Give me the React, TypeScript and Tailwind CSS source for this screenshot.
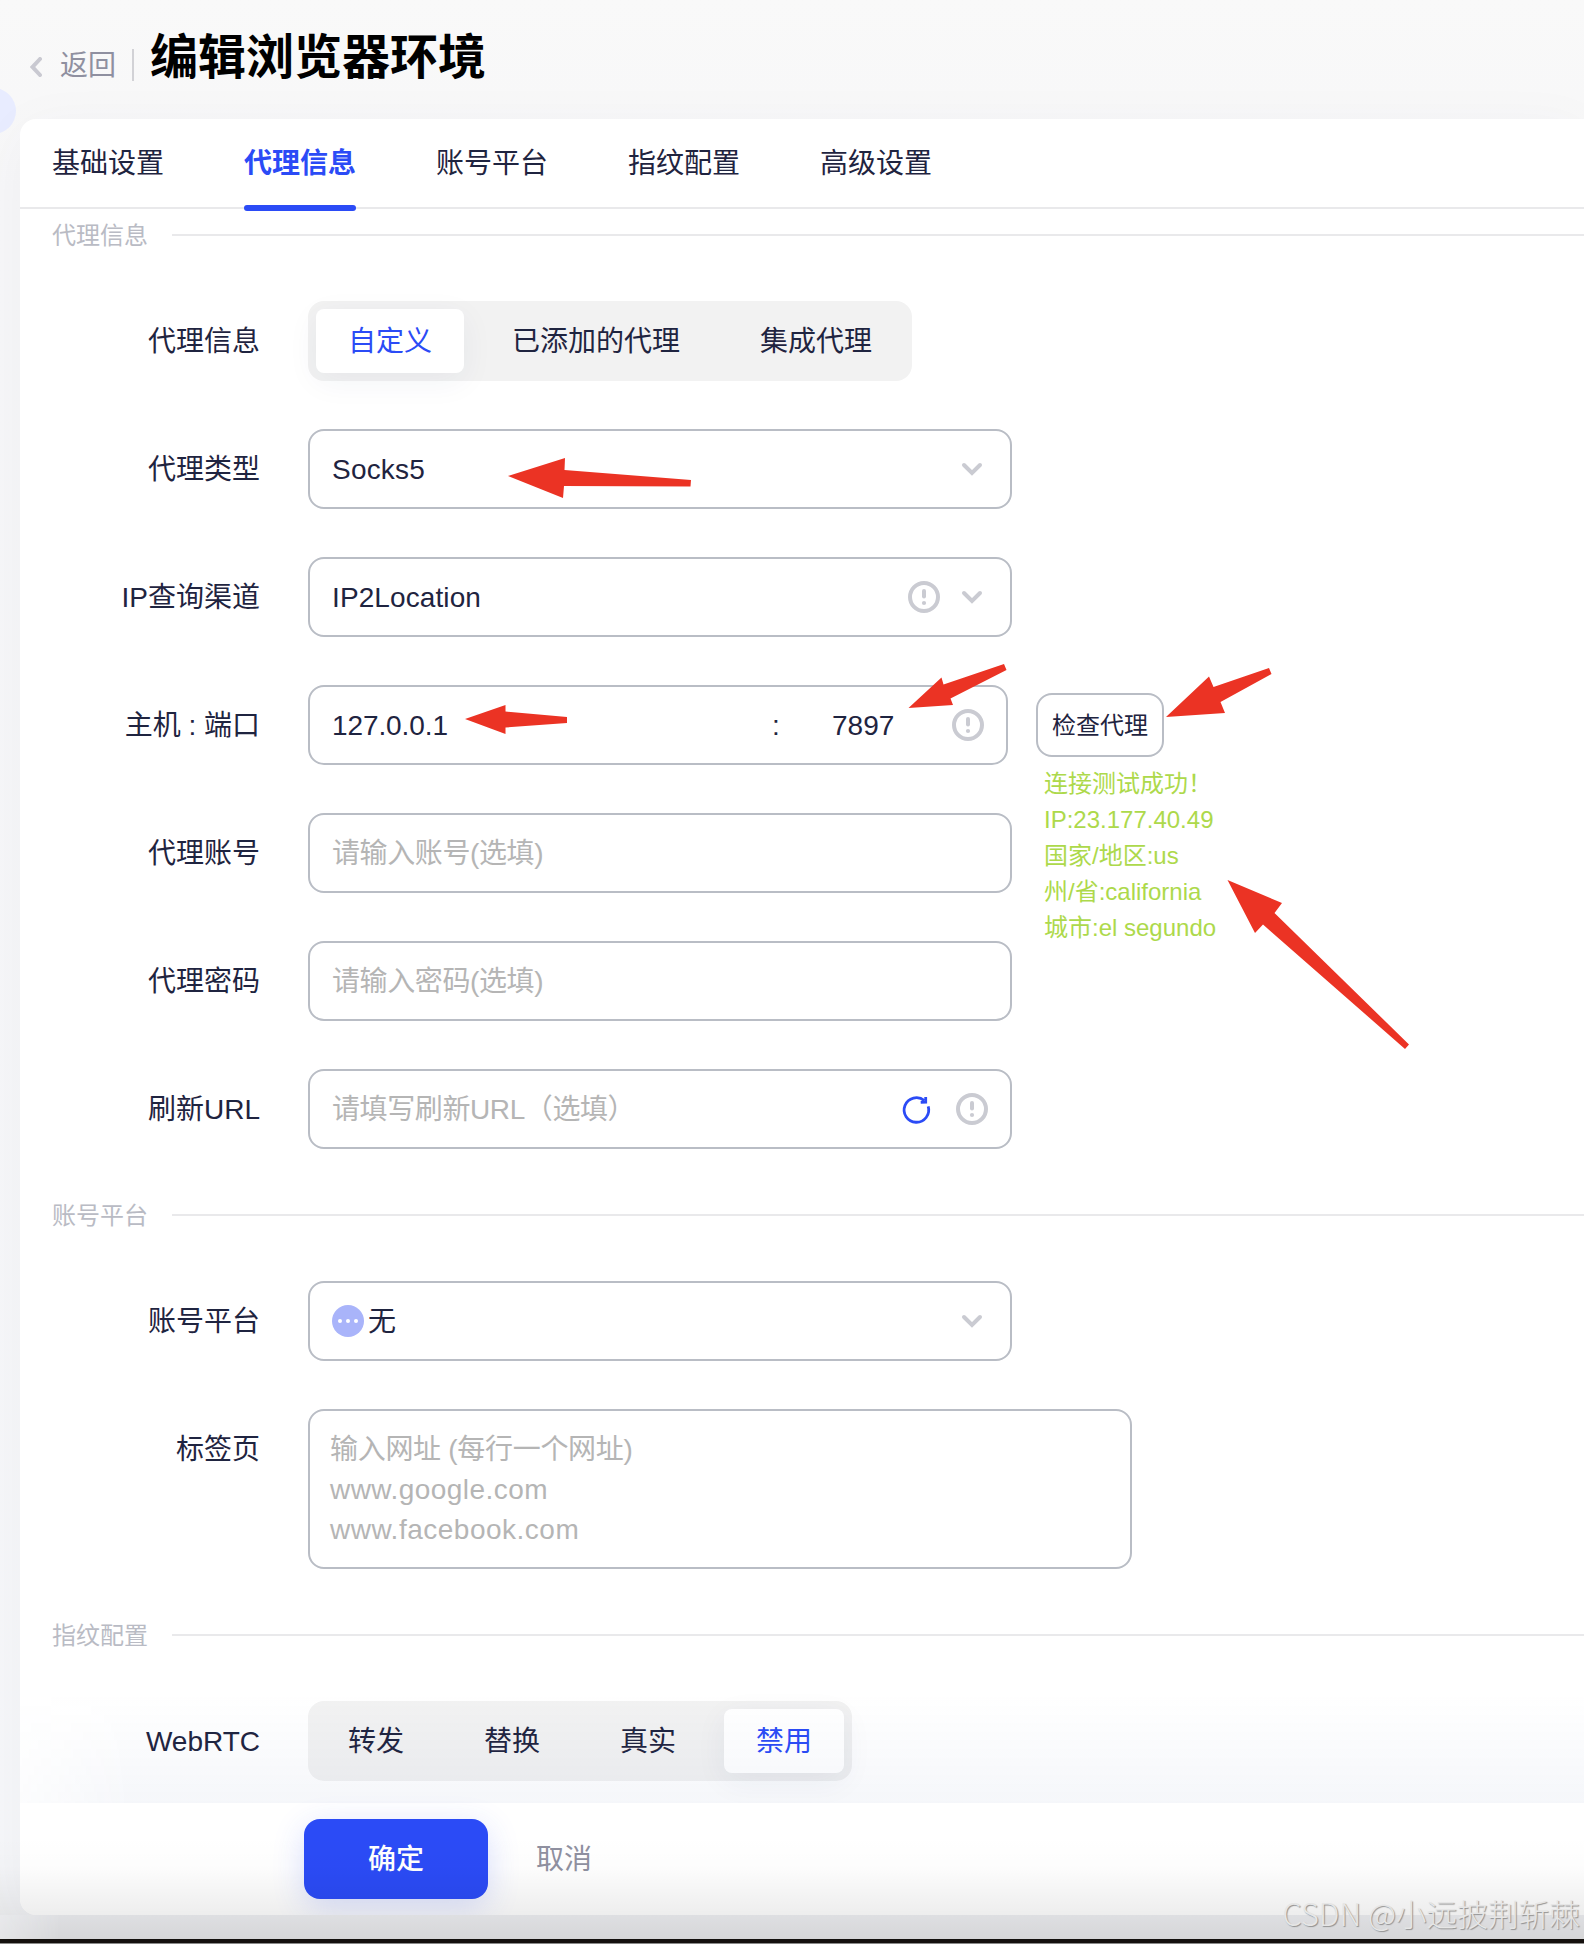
import type { ReactNode } from 'react';

const tabs = ['基础设置', '代理信息', '账号平台', '指纹配置', '高级设置'];
const proxySources = ['自定义', '已添加的代理', '集成代理'];
const webrtcModes = ['转发', '替换', '真实', '禁用'];
const checkResult = [
  '连接测试成功！',
  'IP:23.177.40.49',
  '国家/地区:us',
  '州/省:california',
  '城市:el segundo',
];

const arrows = [
  '508,476 565,458 564.5,470 691,480 690.5,486.5 564,486 563,498',
  '465,719 505.5,705 505.5,711.5 567,717 567,723 505.5,727.5 505.5,734',
  '908.5,708 941.5,677.5 943.5,684.5 1004,664 1006.5,670 950.5,698.5 953,705',
  '1166,717 1209,676.5 1213.5,687 1269,668 1271.5,674 1220.5,702 1225,713',
  '1227.5,880 1282,903 1274.5,913 1409,1044.5 1405,1049 1263,924.5 1255,933',
];

const fieldClass =
  'flex h-20 items-center rounded-2xl border-2 border-[#b9bdc5] bg-white pl-[22px] text-[28px]';
const inputClass =
  'h-full min-w-0 bg-transparent pt-0.5 text-[28px] text-[#1f2440] outline-none placeholder:tracking-[-0.4px] placeholder:text-[#b5b5b5]';

function ChevronDown() {
  return (
    <svg className="h-8 w-8 shrink-0" viewBox="0 0 32 32" fill="none" stroke="#cacbd2" strokeWidth="4">
      <path d="M8 12l8 8 8-8" strokeLinecap="round" />
    </svg>
  );
}

function InfoIcon() {
  return (
    <svg className="h-8 w-8 shrink-0" viewBox="0 0 32 32" fill="none" stroke="#cacbd2" strokeLinecap="round">
      <circle cx="16" cy="16" r="14" strokeWidth="4" />
      <path d="M16 10v5.5" strokeWidth="4" />
      <circle cx="16" cy="22" r="2.1" fill="#cacbd2" stroke="none" />
    </svg>
  );
}

function RefreshIcon() {
  return (
    <svg className="h-8 w-8 shrink-0" viewBox="0 0 32 32" fill="none" stroke="#2b4bf6" strokeWidth="2.8">
      <path d="M28.2 13.4A12.3 12.3 0 1 1 24.4 7.6" />
      <path d="M25.7 4v5.1l-5 .3" />
    </svg>
  );
}

function MoreIcon() {
  return (
    <svg className="mr-1 h-8 w-8 shrink-0" viewBox="0 0 32 32">
      <circle cx="16" cy="16" r="16" fill="#a9b4fa" />
      <g fill="#fff">
        <circle cx="8" cy="16" r="2" />
        <circle cx="16" cy="16" r="2" />
        <circle cx="24" cy="16" r="2" />
      </g>
    </svg>
  );
}

function SectionTitle({ children }: { children: ReactNode }) {
  return (
    <div className="flex h-8 items-center gap-6 pl-8 text-2xl text-[#b9bbc4]">
      <span className="pt-0.5">{children}</span>
      <span className="h-0.5 flex-1 bg-[#e9e9eb]" />
    </div>
  );
}

function Row({ label, children }: { label: string; children: ReactNode }) {
  return (
    <div className="flex h-20 items-start gap-12">
      <div className="w-60 shrink-0 text-right text-[28px] leading-[82px]">{label}</div>
      {children}
    </div>
  );
}

function Segmented({ items, active }: { items: string[]; active: string }) {
  return (
    <div className="flex h-20 gap-4 rounded-2xl bg-[#f2f2f2] p-2">
      {items.map((item) => (
        <button
          key={item}
          className={[
            'h-16 rounded-lg px-8 pt-0.5 text-[28px] leading-[62px]',
            item === active ? 'bg-white text-[#2b4bf6] shadow-[0_8px_32px_rgba(40,50,110,0.06)]' : '',
          ].join(' ')}
        >
          {item}
        </button>
      ))}
    </div>
  );
}

export default function App() {
  return (
    <div className="relative flex h-[1944px] w-[1584px] flex-col overflow-hidden bg-linear-to-b from-[#f9f9f9] via-[#f7f7f8] via-10% to-[#f6f7f9] font-['Liberation_Sans','Noto_Sans_CJK_SC',sans-serif] text-[#1f2440]">
      <header className="flex h-[119px] shrink-0 items-start pl-[30px]">
        <svg className="mt-[57px] h-5 w-3" viewBox="0 0 12 20" fill="none" stroke="#c9c9d1" strokeWidth="4">
          <path d="M10 2l-7.4 8L10 18" strokeLinecap="round" />
        </svg>
        <span className="mt-[46px] ml-[18px] text-[28px] leading-10 text-[#8f90a0]">返回</span>
        <span className="mt-[49px] ml-4 h-8 w-0.5 bg-[#d2d2d6]" />
        <h1 className="mt-[26px] ml-4 text-[48px] leading-16 font-bold text-black">编辑浏览器环境</h1>
      </header>
      <span className="absolute top-[88px] -left-[30px] size-[46px] rounded-full bg-[#e8ecff]" />

      <div className="relative ml-5 flex h-[1796px] shrink-0 flex-col rounded-l-2xl bg-white shadow-[0_10px_60px_rgba(40,50,100,0.04)]">
        <nav className="flex h-[90px] shrink-0 gap-20 border-b-2 border-[#e9e9eb] pl-8">
          {tabs.map((tab) => (
            <button
              key={tab}
              className={[
                'relative h-[88px] pt-0.5 text-[28px]',
                tab === '代理信息' ? 'font-bold text-[#2b4bf6]' : '',
              ].join(' ')}
            >
              {tab}
              {tab === '代理信息' && (
                <span className="absolute inset-x-0 -bottom-1 h-1.5 rounded-full bg-[#2b4bf6]" />
              )}
            </button>
          ))}
        </nav>

        <main className="flex h-[1594px] shrink-0 flex-col gap-[50px] overflow-hidden pt-2.5">
          <SectionTitle>代理信息</SectionTitle>
          <div className="flex flex-col gap-12">
            <Row label="代理信息">
              <Segmented items={proxySources} active="自定义" />
            </Row>
            <Row label="代理类型">
              <div className={`${fieldClass} w-[704px] pr-[22px]`}>
                <span className="flex-1 pt-0.5 tracking-[0.2px]">Socks5</span>
                <ChevronDown />
              </div>
            </Row>
            <Row label="IP查询渠道">
              <div className={`${fieldClass} w-[704px] gap-4 pr-[22px]`}>
                <span className="flex-1 pt-0.5 tracking-[0.1px]">IP2Location</span>
                <InfoIcon />
                <ChevronDown />
              </div>
            </Row>
            <Row label="主机 : 端口">
              <div className="flex items-center gap-7">
                <div className={`${fieldClass} w-[700px] pr-[22px]`}>
                  <input className={`${inputClass} w-[440px] tracking-[-0.1px]`} defaultValue="127.0.0.1" />
                  <span className="w-[60px] pt-0.5">:</span>
                  <input className={`${inputClass} flex-1`} defaultValue="7897" />
                  <InfoIcon />
                </div>
                <div className="relative">
                  <button className="h-16 w-32 rounded-2xl border-2 border-[#b9bdc5] bg-white pt-0.5 text-2xl">
                    检查代理
                  </button>
                  <div className="absolute top-[73px] left-2 text-2xl leading-9 whitespace-nowrap text-[#add94b]">
                    {checkResult.map((line) => (
                      <p key={line} className="h-9">
                        {line}
                      </p>
                    ))}
                  </div>
                </div>
              </div>
            </Row>
            <Row label="代理账号">
              <div className={`${fieldClass} w-[704px]`}>
                <input className={`${inputClass} flex-1`} placeholder="请输入账号(选填)" />
              </div>
            </Row>
            <Row label="代理密码">
              <div className={`${fieldClass} w-[704px]`}>
                <input className={`${inputClass} flex-1`} placeholder="请输入密码(选填)" />
              </div>
            </Row>
            <Row label="刷新URL">
              <div className={`${fieldClass} w-[704px] gap-6 pr-[22px]`}>
                <input className={`${inputClass} flex-1`} placeholder="请填写刷新URL（选填）" />
                <RefreshIcon />
                <InfoIcon />
              </div>
            </Row>
          </div>

          <SectionTitle>账号平台</SectionTitle>
          <div className="flex h-72 shrink-0 flex-col gap-12">
            <Row label="账号平台">
              <div className={`${fieldClass} w-[704px] pr-[22px]`}>
                <MoreIcon />
                <span className="flex-1 pt-0.5">无</span>
                <ChevronDown />
              </div>
            </Row>
            <Row label="标签页">
              <div className="h-40 w-[824px] shrink-0 rounded-2xl border-2 border-[#b9bdc5] px-5 py-[19px] text-[28px] leading-10 text-[#b5b5b5]">
                <p className="h-10 tracking-[-0.3px]">输入网址 (每行一个网址)</p>
                <p className="h-10 tracking-[0.45px]">www.google.com</p>
                <p className="h-10 tracking-[0.5px]">www.facebook.com</p>
              </div>
            </Row>
          </div>

          <SectionTitle>指纹配置</SectionTitle>
          <Row label="WebRTC">
            <Segmented items={webrtcModes} active="禁用" />
          </Row>
        </main>

        {/* shade cast upwards by the action bar */}
        <div className="pointer-events-none absolute inset-x-0 bottom-28 h-[110px] bg-linear-to-b from-transparent to-[#3c5aa0]/5 [mask-image:linear-gradient(to_right,rgba(0,0,0,0.3),black_110px)]" />

        <footer className="flex h-28 shrink-0 items-center rounded-bl-2xl bg-white pl-[284px]">
          <button className="h-20 w-46 rounded-2xl bg-[#2b4bf6] pt-0.5 text-[28px] font-medium text-white shadow-[0_8px_32px_rgba(43,75,246,0.18)]">
            确定
          </button>
          <button className="ml-12 pt-0.5 text-[28px] text-[#8f90a0]">取消</button>
        </footer>
      </div>

      {/* window edge: soft darkening, then the desktop strip */}
      <div className="pointer-events-none absolute inset-x-0 bottom-[29px] h-20 bg-linear-to-b from-transparent via-black/1 via-40% to-black/7" />
      <div className="h-6 shrink-0 bg-linear-to-b from-[#dedfe2] to-[#d6d6d8] [mask-image:linear-gradient(to_right,rgba(0,0,0,0.55),black_60px)]" />
      <div className="h-1 shrink-0 bg-[#15110e]" />
      <div className="h-px shrink-0 bg-[#8c8c8a]" />

      <svg className="pointer-events-none absolute inset-0 h-full w-full" viewBox="0 0 1584 1944" fill="#eb3324">
        {arrows.map((points) => (
          <polygon key={points} points={points} />
        ))}
      </svg>

      <div className="absolute right-1 bottom-[9px] font-['Noto_Sans_CJK_SC',sans-serif] text-[30.7px] leading-11 font-light whitespace-nowrap text-[#e6e6e6] [text-shadow:1px_1px_1px_#909090]">
        CSDN @小远披荆斩棘
      </div>
    </div>
  );
}
